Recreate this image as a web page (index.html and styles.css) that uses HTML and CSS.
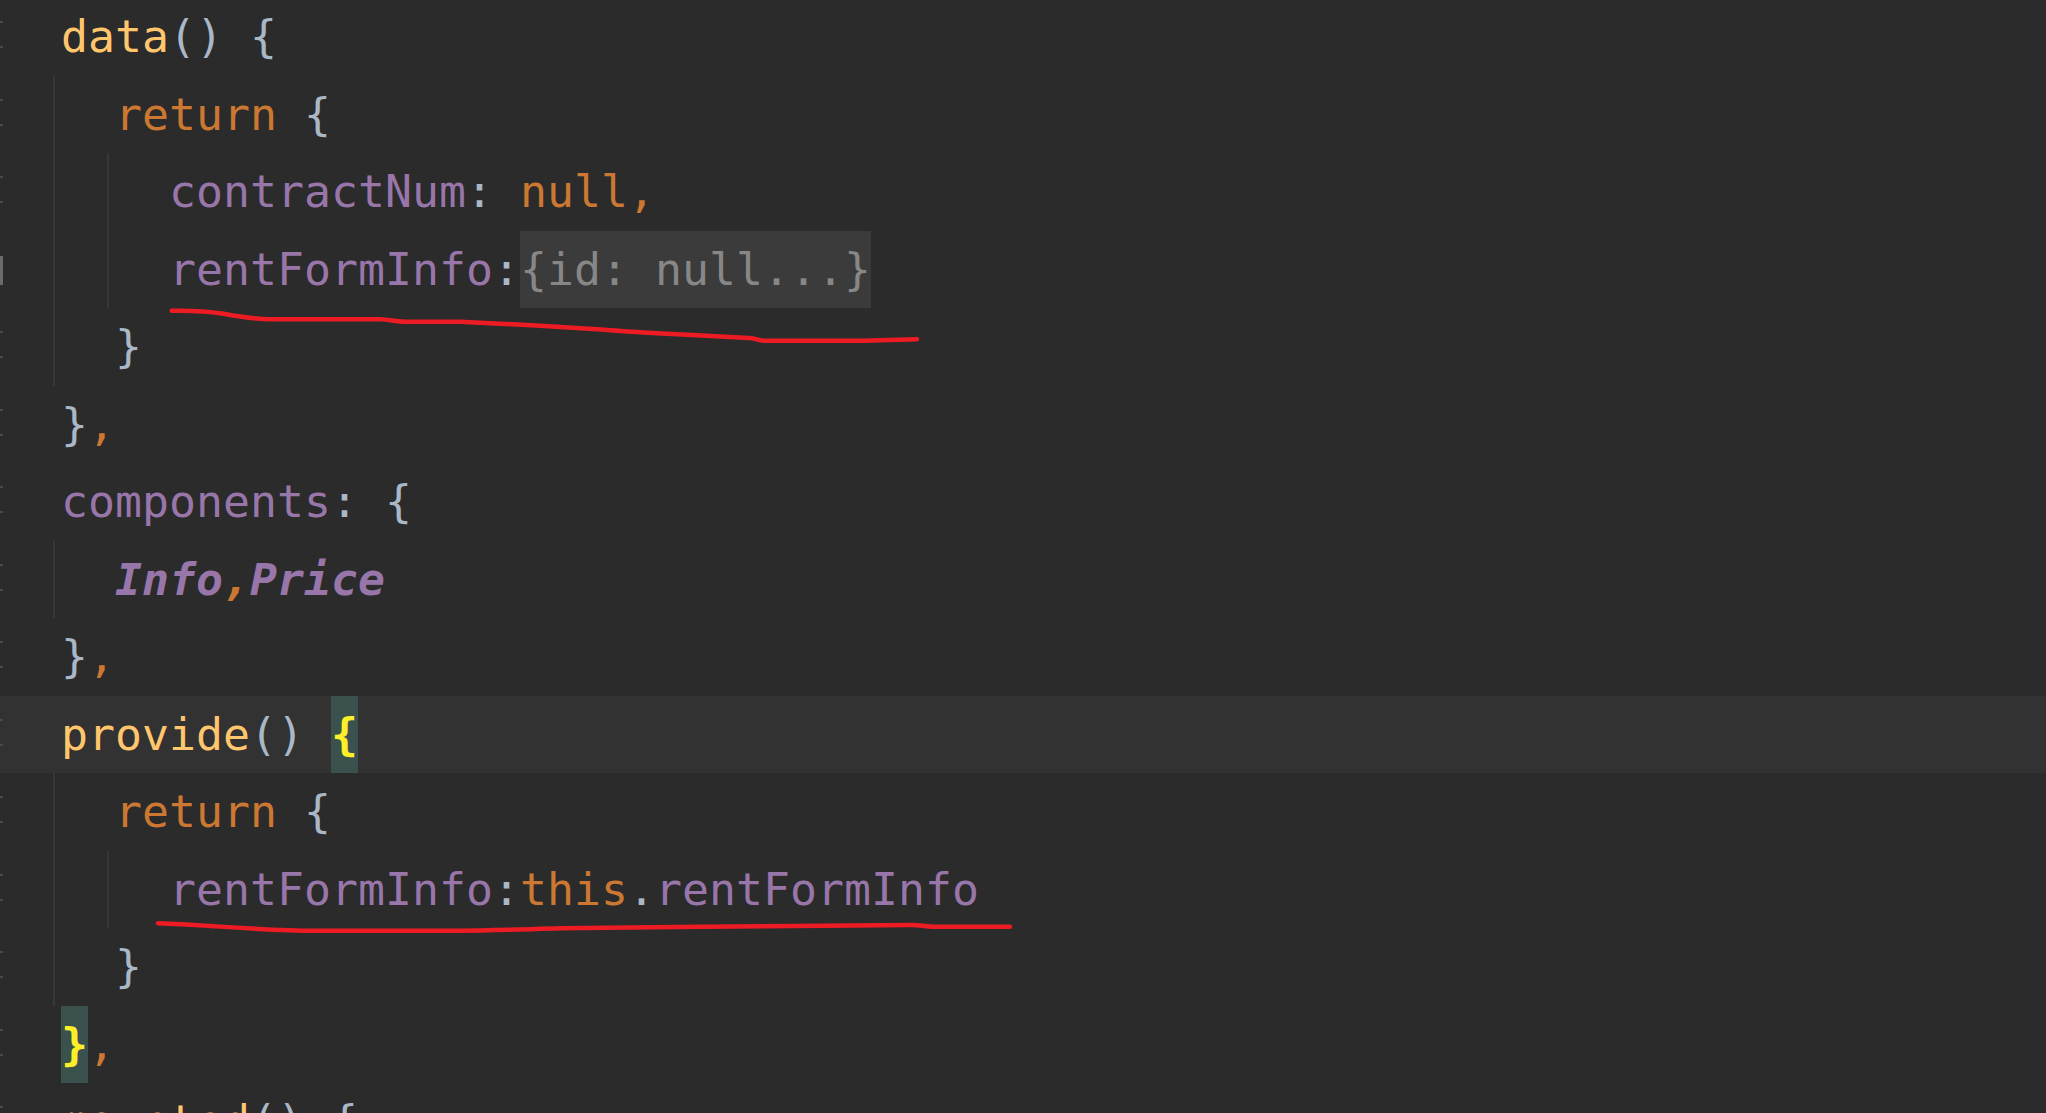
FILE: index.html
```html
<!DOCTYPE html>
<html lang="en">
<head>
<meta charset="utf-8">
<title>Editor</title>
<link rel="stylesheet" href="styles.css">
</head>
<body>
<div class="editor">
  <div class="code">
    <div class="line"><span class="gut"></span><span class="txt"><span class="fn">data</span><span class="p">()</span> <span class="p">{</span></span></div>
    <div class="line g1"><span class="gut"></span><span class="txt">  <span class="kw">return</span> <span class="p">{</span></span></div>
    <div class="line g1 g2"><span class="gut"></span><span class="txt">    <span class="pr">contractNum</span><span class="p">:</span> <span class="kw">null,</span></span></div>
    <div class="line g1 g2"><span class="gut mark"></span><span class="txt">    <span class="pr">rentFormInfo</span><span class="p">:</span><span class="hint">{id: null...}</span></span></div>
    <div class="line g1"><span class="gut"></span><span class="txt">  <span class="p">}</span></span></div>
    <div class="line"><span class="gut"></span><span class="txt"><span class="p">}</span><span class="kw">,</span></span></div>
    <div class="line"><span class="gut"></span><span class="txt"><span class="pr">components</span><span class="p">: {</span></span></div>
    <div class="line g1"><span class="gut"></span><span class="txt">  <span class="pr it">Info</span><span class="kw it">,</span><span class="pr it">Price</span></span></div>
    <div class="line"><span class="gut"></span><span class="txt"><span class="p">}</span><span class="kw">,</span></span></div>
    <div class="line caret"><span class="gut"></span><span class="txt"><span class="fn">provide</span><span class="p">()</span> <span class="match">{</span></span></div>
    <div class="line g1"><span class="gut"></span><span class="txt">  <span class="kw">return</span> <span class="p">{</span></span></div>
    <div class="line g1 g2"><span class="gut"></span><span class="txt">    <span class="pr">rentFormInfo</span><span class="p">:</span><span class="kw">this</span><span class="p">.</span><span class="pr">rentFormInfo</span></span></div>
    <div class="line g1"><span class="gut"></span><span class="txt">  <span class="p">}</span></span></div>
    <div class="line"><span class="gut"></span><span class="txt"><span class="match">}</span><span class="kw">,</span></span></div>
    <div class="line"><span class="gut"></span><span class="txt"><span class="fn">mounted</span><span class="p">()</span> <span class="p">{</span></span></div>
  </div>
  <svg class="ink" width="2046" height="1113" viewBox="0 0 2046 1113" xmlns="http://www.w3.org/2000/svg">
    <path d="M171.7,310.7 C190,310.4 208,311.2 222,313.5 C238,316.5 252,319 270,319.3 L380,319.3 C390,319.6 395,321.6 405,321.7 L460,321.7 C490,323 520,324.6 540,325.7 L597,329.3 C620,331 640,332.6 657,333.3 L697,335.3 L753,338.3 C757,339.6 760,340.7 766,340.7 L863,340.7 L917,339.3" />
    <path d="M158,923.3 C180,924 195,925 210.5,926 C250,928.6 280,930.7 315.7,930.7 L456,930.7 C500,930.5 530,929 561,928.3 L701.5,926.7 L912,925 C920,925 925,926.7 933,926.7 L1010,926.7" />
  </svg>
</div>
</body>
</html>
```
FILE: styles.css
```css
html, body {
  margin: 0;
  padding: 0;
  background: #2b2b2b;
}

body {
  width: 2046px;
  height: 1113px;
  overflow: hidden;
}

.editor {
  position: relative;
  width: 2046px;
  height: 1113px;
  overflow: hidden;
}

.code {
  margin-top: -2px;
  font-family: "DejaVu Sans Mono", "Liberation Mono", monospace;
  font-size: 44.85px;
  color: #a9b7c6;
}

.line {
  display: flex;
  height: 77.5px;
  line-height: 77.5px;
  white-space: pre;
}

.g1 {
  background: linear-gradient(#373737, #373737) 53px 0 / 2px 100% no-repeat;
}

.g1.g2 {
  background:
    linear-gradient(#373737, #373737) 53px 0 / 2px 100% no-repeat,
    linear-gradient(#373737, #373737) 107px 0 / 2px 100% no-repeat;
}

.caret {
  background: #323232;
}

.gut {
  flex: none;
  width: 3px;
  height: 100%;
  background:
    linear-gradient(#4a4a4a, #4a4a4a) 0 23px / 3px 2px no-repeat,
    linear-gradient(#4a4a4a, #4a4a4a) 0 48px / 3px 2px no-repeat;
}

.gut.mark {
  background:
    linear-gradient(#6b6b6b, #6b6b6b) 0 25px / 3px 29px no-repeat;
}

.txt {
  padding-left: 58px;
  display: block;
}

.fn { color: #ffc66d; }
.kw { color: #cc7832; }
.pr { color: #9876aa; }
.p  { color: #a9b7c6; }

.it {
  font-style: italic;
  font-weight: bold;
}

.hint {
  display: inline-block;
  height: 77.5px;
  background: #3b3b3b;
  color: #878787;
}

.match {
  display: inline-block;
  height: 77.5px;
  background: #3b514d;
  color: #ffef28;
  font-weight: bold;
}

.ink {
  position: absolute;
  left: 0;
  top: 0;
  pointer-events: none;
}

.ink path {
  fill: none;
  stroke: #ed1c24;
  stroke-width: 4.5;
  stroke-linecap: round;
  stroke-linejoin: round;
}
```
